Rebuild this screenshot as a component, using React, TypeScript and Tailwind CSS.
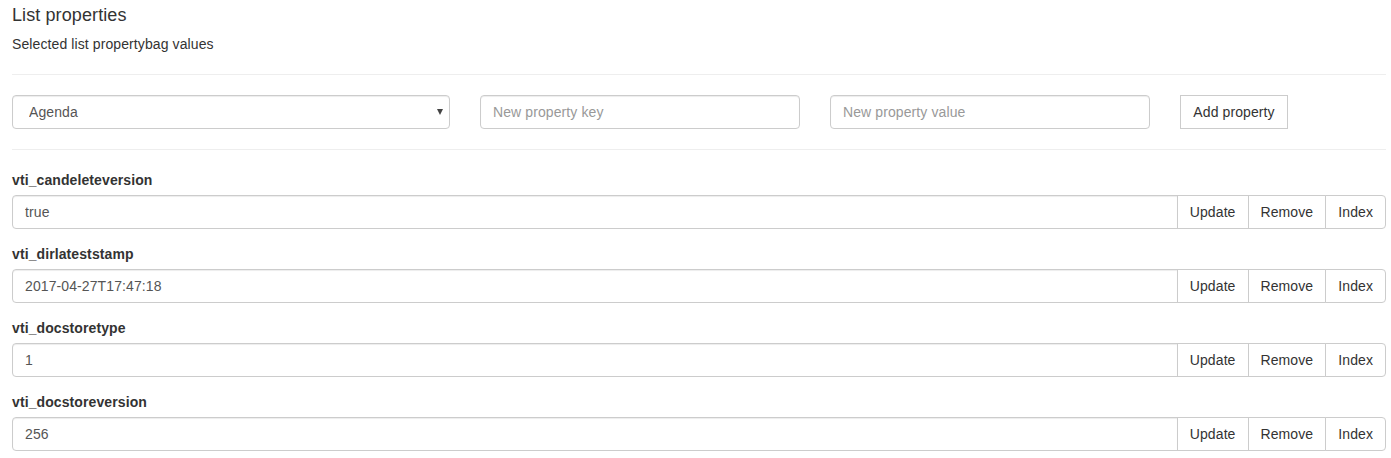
import { useState } from 'react';

interface PropertyRow {
  key: string;
  value: string;
}

const initialRows: PropertyRow[] = [
  { key: 'vti_candeleteversion', value: 'true' },
  { key: 'vti_dirlateststamp', value: '2017-04-27T17:47:18' },
  { key: 'vti_docstoretype', value: '1' },
  { key: 'vti_docstoreversion', value: '256' },
];

export default function App() {
  const [rows, setRows] = useState(initialRows);
  const [list, setList] = useState('Agenda');

  const inputCls =
    'h-[34px] border border-[#ccc] bg-white px-3 text-[14px] text-[#555] placeholder:text-[#999] outline-none shadow-[inset_0_1px_1px_rgba(0,0,0,0.075)]';
  const btnCls =
    'h-[34px] border border-[#ccc] bg-white px-3 text-[14px] text-[#333] hover:bg-[#e6e6e6]';

  return (
    <div className="min-h-screen bg-white pl-3 pr-[5px] font-['Liberation_Sans',Arial,sans-serif] text-[14px] leading-5 tracking-[0.1px] text-[#333]">
      {/* Header */}
      <h4 className="pt-[5px] text-[18px] leading-[20px] font-normal">List properties</h4>
      <p className="mt-[9px]">Selected list propertybag values</p>

      <hr className="my-5 border-0 border-t border-[#eee]" />

      {/* Add new property */}
      <div className="flex items-center gap-[30px]">
        <div className="relative w-[438px]">
          <select
            value={list}
            onChange={(e) => setList(e.target.value)}
            className={`${inputCls} w-full appearance-none rounded pl-4`}
          >
            <option>Agenda</option>
            <option>Documents</option>
            <option>Tasks</option>
          </select>
          <span className="pointer-events-none absolute right-[7px] top-[14px] h-0 w-0 border-x-[3px] border-t-[6px] border-x-transparent border-t-[#444]" />
        </div>
        <input className={`${inputCls} w-[320px] rounded`} placeholder="New property key" />
        <input className={`${inputCls} w-[320px] rounded`} placeholder="New property value" />
        <button className={`${btnCls} w-[108px]`}>Add property</button>
      </div>

      <hr className="my-5 border-0 border-t border-[#eee]" />

      {/* Existing properties */}
      {rows.map((row, i) => (
        <div key={row.key} className="mb-[15px]">
          <label className="mb-[5px] block font-bold">{row.key}</label>
          <div className="flex">
            <input
              className={`${inputCls} min-w-0 flex-1 rounded-l`}
              value={row.value}
              onChange={(e) =>
                setRows(rows.map((r, j) => (j === i ? { ...r, value: e.target.value } : r)))
              }
            />
            <button className={`${btnCls} -ml-px`}>Update</button>
            <button className={`${btnCls} -ml-px`}>Remove</button>
            <button className={`${btnCls} -ml-px rounded-r`}>Index</button>
          </div>
        </div>
      ))}
    </div>
  );
}
